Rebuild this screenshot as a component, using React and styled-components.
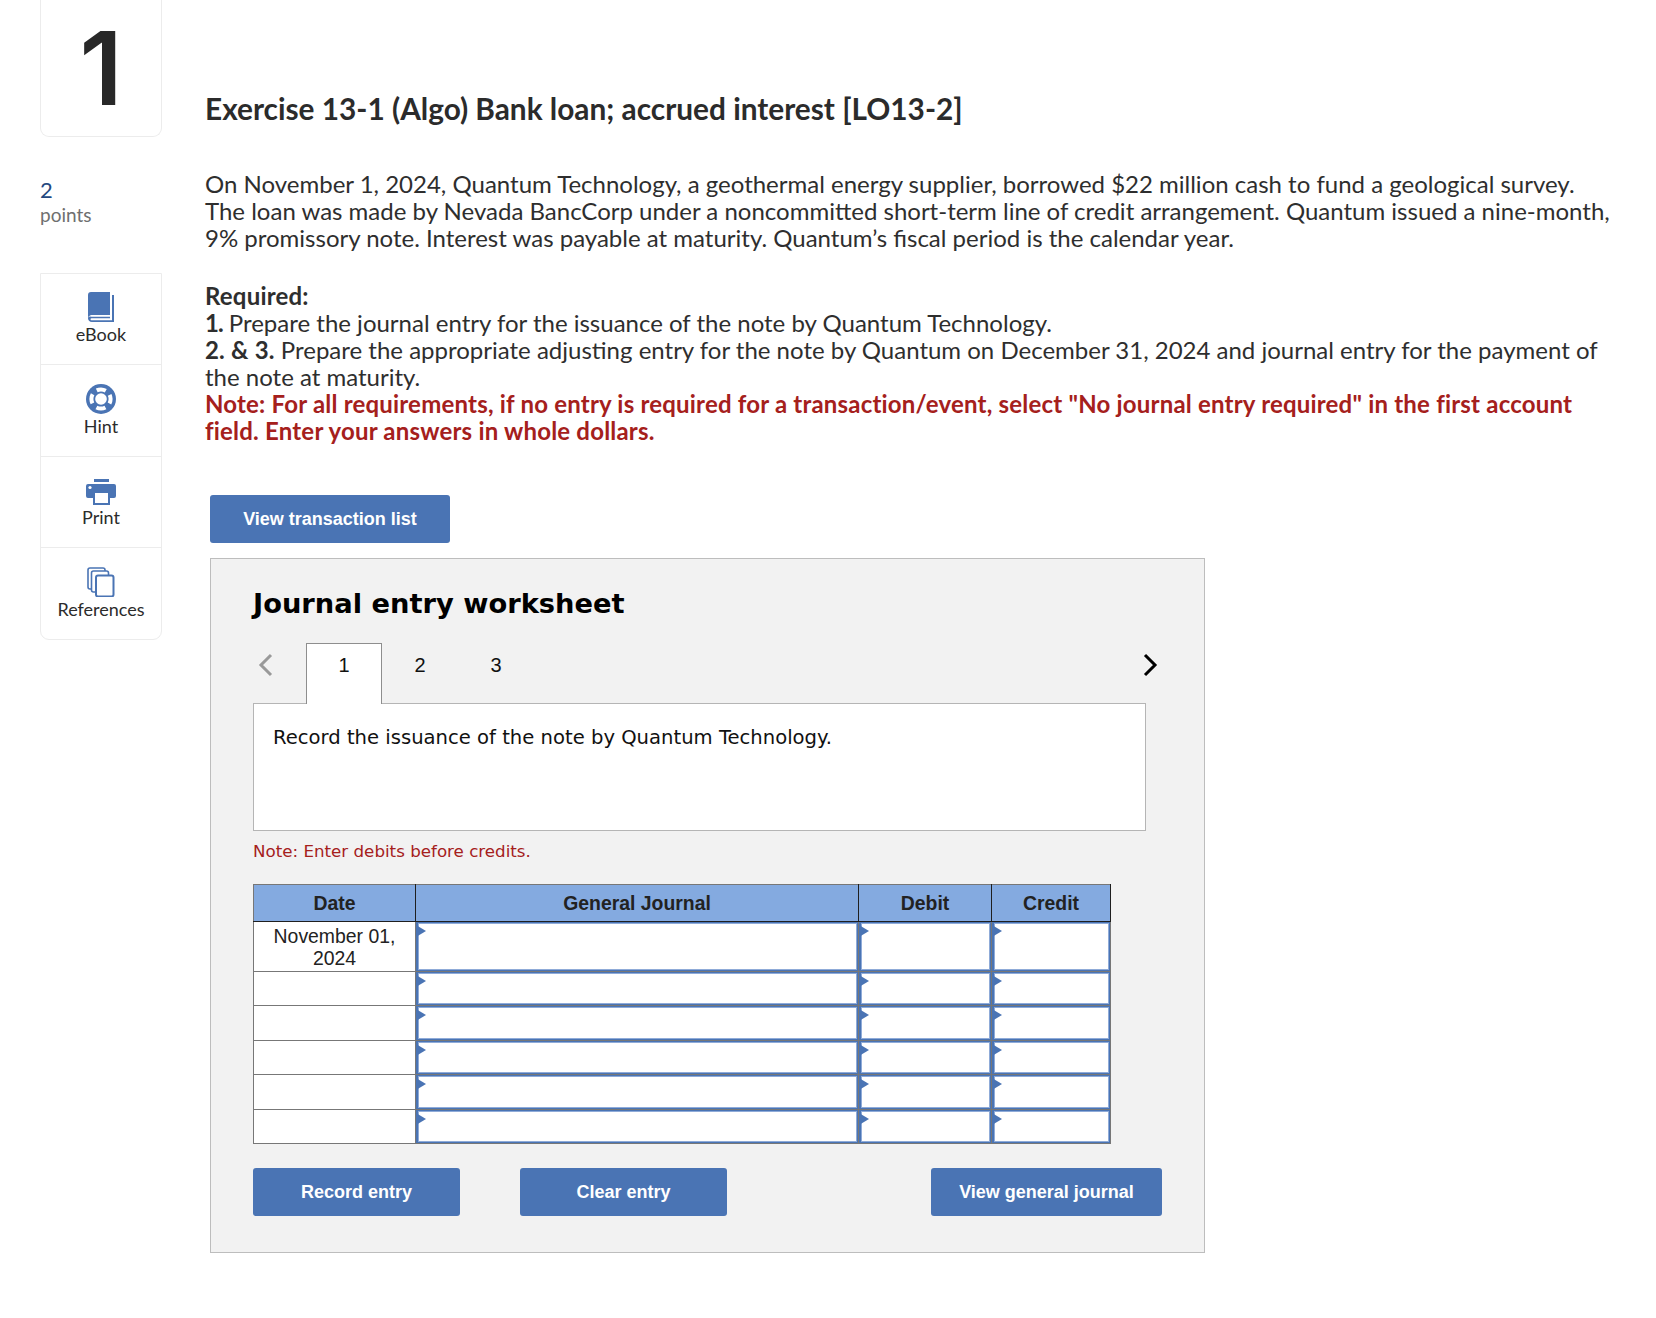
import React from "react";
import styled, { createGlobalStyle } from "styled-components";

const GlobalStyle = createGlobalStyle`
  html, body {
    margin: 0;
    padding: 0;
    background: #fff;
  }

  body {
    font-family: "Lato", "Liberation Sans", sans-serif;
    color: #2b2b2b;
  }
`;

const BLUE = "#4a74b4";
const LIGHT_BLUE = "#8fabd8";
const RED = "#a5201c";

const Page = styled.div`
  width: 1656px;
  height: 1318px;
  overflow: hidden;
  display: flex;
  align-items: flex-start;
  padding-left: 40px;
  box-sizing: border-box;
`;

// left rail with number, points and tools
const Rail = styled.aside`
  width: 122px;
  flex-shrink: 0;
  display: flex;
  flex-direction: column;
`;

const NumberBox = styled.div`
  width: 122px;
  height: 137px;
  box-sizing: border-box;
  border: 1px solid #ececec;
  border-top: none;
  border-radius: 0 0 9px 9px;
  display: flex;
  justify-content: center;
  align-items: center;
  font-family: "Inter", "Liberation Sans", sans-serif;
  font-size: 102px;
  font-weight: 600;
  line-height: 1;
  color: #282828;
`;

const Points = styled.div`
  margin-top: 40px;
  font-size: 19px;
  line-height: 25px;
  color: #6f6f6f;

  > strong {
    display: block;
    font-size: 22px;
    font-weight: 400;
    color: #24487f;
  }
`;

const ToolCard = styled.div`
  margin-top: 46px;
  border: 1px solid #ececec;
  border-radius: 0 0 9px 9px;
  display: flex;
  flex-direction: column;
`;

const Tool = styled.div`
  height: 91.25px;
  display: flex;
  flex-direction: column;
  align-items: center;
  justify-content: flex-end;
  gap: 1px;
  padding-bottom: 19px;
  box-sizing: border-box;
  font-size: 18px;
  line-height: 22px;
  color: #2b2b2b;

  &:not(:last-child) {
    border-bottom: 1px solid #ececec;
  }

  svg {
    display: block;
  }
`;

// question text column
const Main = styled.main`
  margin-left: 43px;
  flex: 1;
  min-width: 0;
`;

const Title = styled.h1`
  margin: 91px 0 0;
  font-size: 29.8px;
  line-height: 36px;
  font-weight: 700;
  color: #2b2b2b;
`;

const Body = styled.div`
  margin-top: 43px;
  font-size: 24px;
  line-height: 27px;
  width: 1410px;
  color: #2e2e2e;

  b {
    font-weight: 700;
    letter-spacing: 0.2px;
  }
`;

const Required = styled(Body)`
  margin-top: 31px;
`;

const StepNumber = styled.b`
  && {
    letter-spacing: -1px;
  }
`;

const RedNote = styled.b`
  color: ${RED};
`;

const Button = styled.button`
  height: 48px;
  width: ${(p) => p.$w}px;
  border: none;
  border-radius: 3px;
  background: ${BLUE};
  color: #fff;
  font-family: "Liberation Sans", Arial, sans-serif;
  font-size: 18px;
  font-weight: 700;
  padding: 0;
`;

const TopButton = styled(Button)`
  display: block;
  margin: 51px 0 0 5px;
`;

const Worksheet = styled.section`
  margin: 15px 0 0 5px;
  width: 995px;
  height: 695px;
  box-sizing: border-box;
  background: #f2f2f2;
  border: 1px solid #bdbdbd;
  padding: 27px 42px 0;
`;

const SheetTitle = styled.h2`
  margin: 0;
  font-family: "DejaVu Sans", Verdana, sans-serif;
  font-size: 27.3px;
  line-height: 36px;
  font-weight: 700;
  color: #000;
`;

const TabRow = styled.div`
  margin-top: 21px;
  width: 893px;
  height: 60px;
  display: flex;
  align-items: flex-start;
  position: relative;
  z-index: 1;
`;

const Arrow = styled.div`
  width: 53px;
  height: 44px;
  flex-shrink: 0;
  display: flex;
  align-items: center;
  padding-left: 4px;
  box-sizing: border-box;

  svg {
    display: block;
  }
`;

const NextArrow = styled(Arrow)`
  width: auto;
  padding-left: 0;
  margin-left: auto;
  margin-right: -13px;
`;

const Tab = styled.div`
  width: 76px;
  height: ${(p) => (p.$active ? 61 : 44)}px;
  box-sizing: border-box;
  display: flex;
  align-items: flex-start;
  justify-content: center;
  padding-top: ${(p) => (p.$active ? 9 : 10)}px;
  font-family: "Liberation Sans", Arial, sans-serif;
  font-size: 20px;
  line-height: 24px;
  color: #111;
  ${(p) =>
    p.$active &&
    `
    background: #fff;
    border: 1px solid #8e8e8e;
    border-bottom: none;
  `}
`;

const PromptBox = styled.div`
  width: 893px;
  height: 128px;
  box-sizing: border-box;
  background: #fff;
  border: 1px solid #b5b5b5;
  padding: 22px 19px;
  font-family: "DejaVu Sans", Verdana, sans-serif;
  font-size: 19.6px;
  line-height: 24px;
  color: #111;
`;

const DebitNote = styled.div`
  margin-top: 9px;
  font-family: "DejaVu Sans", Verdana, sans-serif;
  font-size: 16.7px;
  line-height: 22px;
  color: ${RED};
`;

const Journal = styled.table`
  margin-top: 22px;
  width: 857px;
  table-layout: fixed;
  border-collapse: collapse;
  font-family: "Liberation Sans", Arial, sans-serif;
  font-size: 19.4px;
  line-height: 22px;
  color: #222;
`;

const Head = styled.th`
  height: 36px;
  padding: 0;
  background: #84aae0;
  border: 1px solid #1f1f1f;
  border-top-color: #777;
  border-left-color: ${(p) => (p.$first ? "#777" : "#1f1f1f")};
  font-weight: 700;
  text-align: center;
`;

const DateCell = styled.td`
  height: ${(p) => p.$h}px;
  padding: 0;
  background: #fff;
  border: 1px solid #777;
  text-align: center;
`;

const EntryCell = styled.td`
  height: ${(p) => p.$h}px;
  padding: 0;
  background: #fff;
  border: 1px solid #777;
  position: relative;
  box-sizing: border-box;
  box-shadow: inset 2px 1px 0 ${BLUE}, inset -1px -1px 0 ${BLUE}, inset 3px 2px 0 ${LIGHT_BLUE},
    inset -2px -2px 0 ${LIGHT_BLUE};

  &::before {
    content: "";
    position: absolute;
    left: 0;
    top: 3px;
    border-left: 10px solid ${BLUE};
    border-top: 6px solid transparent;
    border-bottom: 6px solid transparent;
  }
`;

const ButtonRow = styled.div`
  margin-top: 24px;
  width: 909px;
  display: flex;
  gap: 60px;

  > :last-child {
    margin-left: auto;
  }
`;

const BookIcon = () => (
  <svg width="28" height="30" viewBox="0 0 28 30">
    <path fill={BLUE} d="M4 0h19v23H4.5a2.5 2.5 0 0 0-2.4 1.6L1 25V3a3 3 0 0 1 3-3z" />
    <path fill={BLUE} d="M1 25.5A3.5 3.5 0 0 1 4.5 24.8H23v1.4H4.5a1 1 0 0 0 0 2H25V3h2v27H5a4 4 0 0 1-4-4.5z" />
  </svg>
);

const HintIcon = () => (
  <svg width="30" height="30" viewBox="0 0 30 30">
    <circle cx="15" cy="15" r="15" fill={BLUE} />
    <circle cx="15" cy="15" r="5.8" fill="#fff" />
    <circle
      cx="15"
      cy="15"
      r="9.6"
      fill="none"
      stroke="#fff"
      strokeWidth="4"
      strokeDasharray="9.4 5.68"
      strokeDashoffset="4.7"
    />
  </svg>
);

const PrintIcon = () => (
  <svg width="30" height="26" viewBox="0 0 30 26">
    <rect x="8" y="0" width="15" height="3" fill={BLUE} />
    <path fill={BLUE} d="M2 5h26a2 2 0 0 1 2 2v10a2 2 0 0 1-2 2h-4v-7H7v7H2a2 2 0 0 1-2-2V7a2 2 0 0 1 2-2z" />
    <circle cx="4" cy="8.5" r="1.6" fill="#fff" />
    <rect x="8" y="13" width="15" height="12" fill="#fff" stroke={BLUE} strokeWidth="2" />
  </svg>
);

const RefIcon = () => (
  <svg width="28" height="30" viewBox="0 0 28 30" fill="#fff" stroke={BLUE} strokeWidth="1.6">
    <rect x="1" y="1" width="17" height="21" rx="2" />
    <rect x="4.5" y="4" width="17" height="21" rx="2" />
    <rect x="9" y="8.5" width="17.5" height="21" rx="2" strokeWidth="2" />
  </svg>
);

const ROW_HEIGHTS = [49, 33, 34, 33, 34, 33];

export default function App() {
  return (
    <>
      <GlobalStyle />
      <Page>
        <Rail>
          <NumberBox>1</NumberBox>
          <Points>
            <strong>2</strong>
            points
          </Points>
          <ToolCard>
            <Tool>
              <BookIcon />
              eBook
            </Tool>
            <Tool>
              <HintIcon />
              Hint
            </Tool>
            <Tool>
              <PrintIcon />
              Print
            </Tool>
            <Tool>
              <RefIcon />
              References
            </Tool>
          </ToolCard>
        </Rail>
        <Main>
          <Title>Exercise 13-1 (Algo) Bank loan; accrued interest [LO13-2]</Title>
          <Body>
            On November 1, 2024, Quantum Technology, a geothermal energy supplier, borrowed $22 million cash to fund a
            geological survey. The loan was made by Nevada BancCorp under a noncommitted short-term line of credit
            arrangement. Quantum issued a nine-month, 9% promissory note. Interest was payable at maturity. Quantum’s
            fiscal period is the calendar year.
          </Body>
          <Required>
            <b>Required:</b>
            <br />
            <StepNumber>1.</StepNumber> Prepare the journal entry for the issuance of the note by Quantum Technology.
            <br />
            <b>2. &amp; 3.</b> Prepare the appropriate adjusting entry for the note by Quantum on December 31, 2024 and
            journal entry for the payment of the note at maturity.
            <br />
            <RedNote>
              Note: For all requirements, if no entry is required for a transaction/event, select "No journal entry
              required" in the first account field. Enter your answers in whole dollars.
            </RedNote>
          </Required>
          <TopButton $w={240}>View transaction list</TopButton>
          <Worksheet>
            <SheetTitle>Journal entry worksheet</SheetTitle>
            <TabRow>
              <Arrow>
                <svg width="16" height="24" viewBox="0 0 16 24" fill="none" stroke="#999" strokeWidth="3">
                  <path d="M14 2 4 12l10 10" />
                </svg>
              </Arrow>
              <Tab $active>1</Tab>
              <Tab>2</Tab>
              <Tab>3</Tab>
              <NextArrow>
                <svg width="16" height="24" viewBox="0 0 16 24" fill="none" stroke="#000" strokeWidth="3">
                  <path d="M2 2l10 10L2 22" />
                </svg>
              </NextArrow>
            </TabRow>
            <PromptBox>Record the issuance of the note by Quantum Technology.</PromptBox>
            <DebitNote>Note: Enter debits before credits.</DebitNote>
            <Journal>
              <colgroup>
                <col width="162" />
                <col width="443" />
                <col width="133" />
                <col width="119" />
              </colgroup>
              <thead>
                <tr>
                  <Head $first>Date</Head>
                  <Head>General Journal</Head>
                  <Head>Debit</Head>
                  <Head>Credit</Head>
                </tr>
              </thead>
              <tbody>
                {ROW_HEIGHTS.map((h, i) => (
                  <tr key={i}>
                    <DateCell $h={h}>{i === 0 && "November 01, 2024"}</DateCell>
                    <EntryCell $h={h} />
                    <EntryCell $h={h} />
                    <EntryCell $h={h} />
                  </tr>
                ))}
              </tbody>
            </Journal>
            <ButtonRow>
              <Button $w={207}>Record entry</Button>
              <Button $w={207}>Clear entry</Button>
              <Button $w={231}>View general journal</Button>
            </ButtonRow>
          </Worksheet>
        </Main>
      </Page>
    </>
  );
}
